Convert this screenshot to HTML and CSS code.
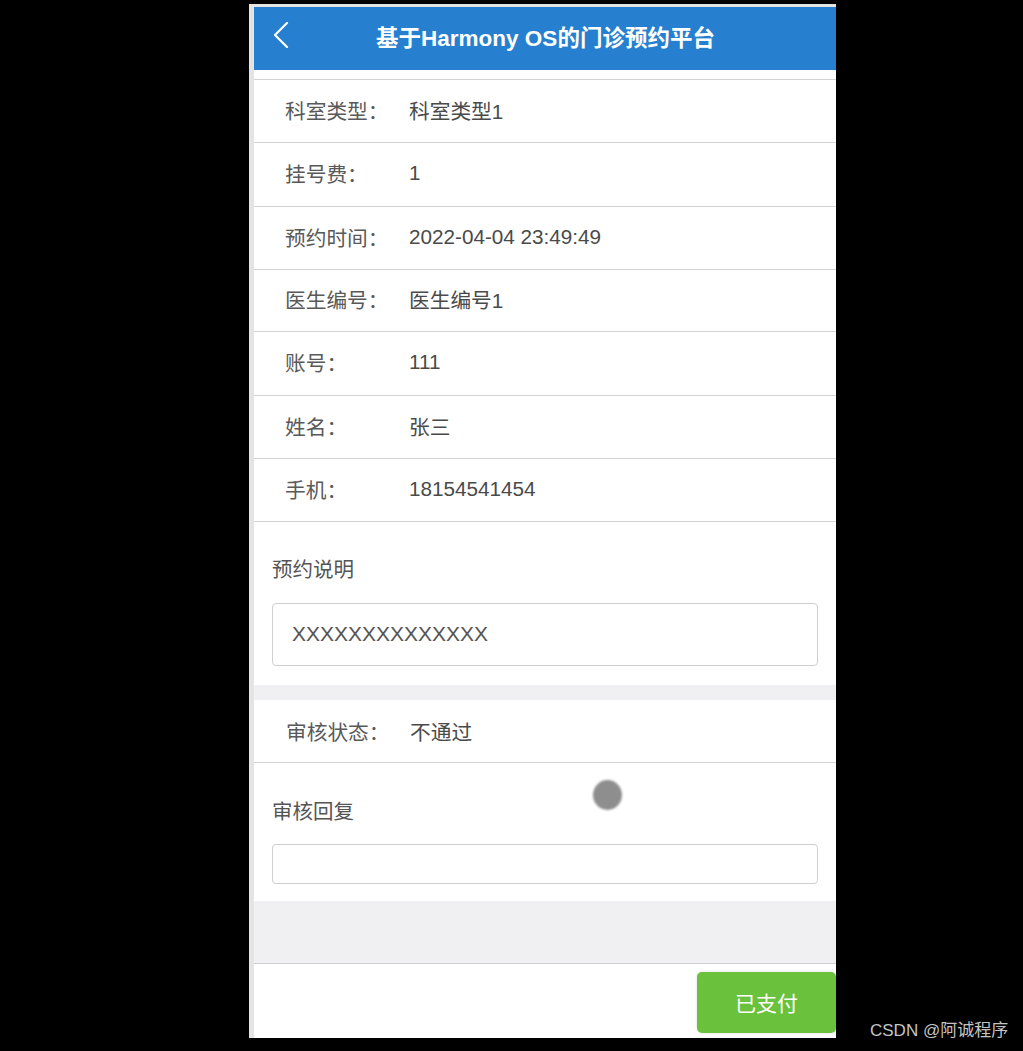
FILE: index.html
```html
<!DOCTYPE html>
<html lang="zh-CN">
<head>
<meta charset="utf-8">
<title>基于Harmony OS的门诊预约平台</title>
<link rel="stylesheet" href="styles.css">
</head>
<body>
<div class="phone">
  <header class="topbar">
    <svg class="back" width="16" height="26" viewBox="0 0 16 26"><polyline points="14,1 2,13 14,25" fill="none" stroke="#fff" stroke-width="2.2" stroke-linecap="round" stroke-linejoin="round"/></svg>
    <h1 class="title">基于Harmony OS的门诊预约平台</h1>
  </header>
  <div class="spacer"></div>
  <div class="list">
    <div class="row"><span class="label">科室类型：</span><span class="value">科室类型1</span></div>
    <div class="row"><span class="label">挂号费：</span><span class="value">1</span></div>
    <div class="row"><span class="label">预约时间：</span><span class="value">2022-04-04 23:49:49</span></div>
    <div class="row"><span class="label">医生编号：</span><span class="value">医生编号1</span></div>
    <div class="row"><span class="label">账号：</span><span class="value">111</span></div>
    <div class="row"><span class="label">姓名：</span><span class="value">张三</span></div>
    <div class="row"><span class="label">手机：</span><span class="value">18154541454</span></div>
  </div>
  <div class="block block-desc">
    <div class="block-label">预约说明</div>
    <input class="field field-tall" type="text" value="XXXXXXXXXXXXXX" readonly>
  </div>
  <div class="gap"></div>
  <div class="row row-status"><span class="label">审核状态：</span><span class="value">不通过</span></div>
  <div class="block block-reply">
    <div class="block-label">审核回复</div>
    <input class="field field-short" type="text" value="" readonly>
  </div>
  <div class="filler"></div>
  <footer class="footer">
    <button class="pay" type="button">已支付</button>
  </footer>
</div>
<div class="touch"></div>
<div class="watermark">CSDN @阿诚程序</div>
</body>
</html>
```

FILE: styles.css
```css
* { box-sizing: border-box; }
html, body { margin: 0; padding: 0; }
body {
  background: #000;
  width: 1023px;
  height: 1051px;
  position: relative;
  overflow: hidden;
  font-family: "Liberation Sans", "Noto Sans CJK SC", sans-serif;
  padding: 4px 0 0 249px;
}
.phone {
  width: 587px;
  height: 1034px;
  background: #fff;
  border-left: 5px solid #e4e4e4;
  border-top: 3px solid #e4e4e4;
  display: flex;
  flex-direction: column;
  overflow: hidden;
}
.topbar {
  height: 63px;
  background: #2680cf;
  display: flex;
  align-items: center;
  justify-content: center;
  position: relative;
  flex: none;
  padding-bottom: 5px;
}
.back {
  position: absolute;
  left: 19px;
  top: 15px;
}
.title {
  margin: 0;
  color: #fff;
  font-size: 22.5px;
  font-weight: bold;
  padding-left: 1px;
}
.spacer { height: 9px; flex: none; }
.list { border-top: 1px solid #d3d3d3; flex: none; }
.row {
  height: 63px;
  border-bottom: 1px solid #d3d3d3;
  display: flex;
  align-items: center;
  padding-left: 31px;
  padding-bottom: 3px;
  font-size: 20.7px;
  flex: none;
}
.row:nth-child(2), .row:nth-child(5) { height: 64px; }
.row:nth-child(4) { height: 62px; }
.label { width: 124px; color: #595959; flex: none; }
.value { color: #4a4a4a; }
.row-status { padding-left: 32px; padding-top: 1px; padding-bottom: 1px; }
.block {
  padding: 33px 18px 19px 18px;
  flex: none;
}
.block-label {
  font-size: 20.5px;
  line-height: 30px;
  color: #555;
}
.block-desc .block-label { margin-bottom: 18px; }
.block-reply { padding-top: 34px; padding-bottom: 17px; }
.block-reply .block-label { margin-bottom: 17px; }
.field {
  display: block;
  width: 100%;
  border: 1px solid #cfcfcf;
  border-radius: 4px;
  background: #fff;
  font-family: inherit;
  font-size: 21px;
  color: #555;
  padding: 0 0 0 19px;
  outline: none;
}
.field-tall { height: 63px; padding-bottom: 2px; }
.field-short { height: 40px; }
.gap { height: 15px; background: #f0eff2; flex: none; }
.filler { height: 62px; background: #f0eff2; flex: none; }
.footer {
  flex: 1;
  border-top: 1px solid #cfcfcf;
  display: flex;
  justify-content: flex-end;
  align-items: flex-start;
  padding-top: 8px;
}
.pay {
  width: 139px;
  height: 61px;
  border: none;
  border-radius: 5px;
  background: #69c13c;
  color: #fff;
  font-family: inherit;
  font-size: 21px;
  padding-bottom: 3px;
  box-shadow: 0 0 3px rgba(0,0,0,0.15);
}
.touch {
  position: absolute;
  left: 593px;
  top: 780px;
  width: 29px;
  height: 30px;
  border-radius: 50%;
  background: #8e8e8e;
  filter: blur(0.8px);
}
.watermark {
  position: absolute;
  left: 870px;
  top: 1020px;
  color: #c4c4c4;
  font-size: 17px;
  line-height: 22px;
}
```
